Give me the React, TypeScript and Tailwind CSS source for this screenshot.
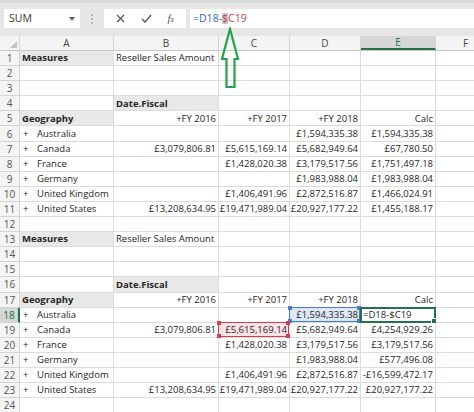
import React from "react";

type Mark = "blue" | "red" | "green";
interface Cell {
  t?: string;
  bold?: boolean;
  fill?: boolean;
  left?: boolean;
  plus?: boolean;
  mark?: Mark;
}

const COL_W = ["w-[94px]", "w-[105px]", "w-[71px]", "w-[71px]", "w-[75px]", "w-[60px]"];
const COL_NAMES = ["A", "B", "C", "D", "E", "F"];

const C = (t?: string, extra: Partial<Cell> = {}): Cell => ({ t, ...extra });
const blank = (): Cell[] => [C(), C(), C(), C(), C(), C()];
const geo = (name: string, b?: string, c?: string, d?: string, e?: string, marks: (Mark | undefined)[] = []): Cell[] => [
  C(name, { plus: true, left: true }),
  C(b, { mark: marks[1] }),
  C(c, { mark: marks[2] }),
  C(d, { mark: marks[3] }),
  C(e, { mark: marks[4], left: marks[4] === "green" }),
  C(),
];

const measures = (): Cell[] => [C("Measures", { bold: true, fill: true, left: true }), C("Reseller Sales Amount", { left: true }), C(), C(), C(), C()];
const fiscal = (): Cell[] => [C(), C("Date.Fiscal", { bold: true, fill: true, left: true }), C(), C(), C(), C()];
const heading = (): Cell[] => [C("Geography", { bold: true, fill: true, left: true }), C("+FY 2016"), C("+FY 2017"), C("+FY 2018"), C("Calc"), C()];

const ROWS: Cell[][] = [
  measures(),
  blank(),
  blank(),
  fiscal(),
  heading(),
  geo("Australia", undefined, undefined, "£1,594,335.38", "£1,594,335.38"),
  geo("Canada", "£3,079,806.81", "£5,615,169.14", "£5,682,949.64", "£67,780.50"),
  geo("France", undefined, "£1,428,020.38", "£3,179,517.56", "£1,751,497.18"),
  geo("Germany", undefined, undefined, "£1,983,988.04", "£1,983,988.04"),
  geo("United Kingdom", undefined, "£1,406,491.96", "£2,872,516.87", "£1,466,024.91"),
  geo("United States", "£13,208,634.95", "£19,471,989.04", "£20,927,177.22", "£1,455,188.17"),
  blank(),
  measures(),
  blank(),
  blank(),
  fiscal(),
  heading(),
  geo("Australia", undefined, undefined, "£1,594,335.38", "=D18-$C19", [undefined, undefined, undefined, "blue", "green"]),
  geo("Canada", "£3,079,806.81", "£5,615,169.14", "£5,682,949.64", "£4,254,929.26", [undefined, undefined, "red"]),
  geo("France", undefined, "£1,428,020.38", "£3,179,517.56", "£3,179,517.56"),
  geo("Germany", undefined, undefined, "£1,983,988.04", "£577,496.08"),
  geo("United Kingdom", undefined, "£1,406,491.96", "£2,872,516.87", "-£16,599,472.17"),
  geo("United States", "£13,208,634.95", "£19,471,989.04", "£20,927,177.22", "£20,927,177.22"),
  blank(),
];

function Handles({ color }: { color: string }) {
  return (
    <>
      <span className={`absolute -left-[2px] -top-[2px] w-[4px] h-[4px] ${color}`} />
      <span className={`absolute -right-[2px] -top-[2px] w-[4px] h-[4px] ${color}`} />
      <span className={`absolute -left-[2px] -bottom-[2px] w-[4px] h-[4px] ${color}`} />
      <span className={`absolute -right-[2px] -bottom-[2px] w-[4px] h-[4px] ${color}`} />
    </>
  );
}

function GridCell({ cell, width }: { cell: Cell; width: string }) {
  const bg = cell.fill
    ? "bg-[#e8e8e8]"
    : cell.mark === "blue"
      ? "bg-[#dde7f6]"
      : cell.mark === "red"
        ? "bg-[#fbe2e4]"
        : "bg-white";
  return (
    <div
      className={`relative ${width} shrink-0 h-full border-r border-b border-[#dcdcdc] ${bg} flex items-center ${cell.left ? "justify-start" : "justify-end"} px-[2px] whitespace-nowrap overflow-visible ${cell.bold ? "font-bold" : ""}`}
    >
      {cell.plus && <span className="inline-block w-[15px] pl-[1px]">+</span>}
      {cell.t}
      {cell.mark === "blue" && (
        <div className="absolute -left-px -top-px right-0 bottom-0 border border-[#4a78d0]">
          <Handles color="bg-[#4a78d0]" />
        </div>
      )}
      {cell.mark === "red" && (
        <div className="absolute -left-px -top-px right-0 bottom-0 border border-[#d0404f]">
          <Handles color="bg-[#d0404f]" />
        </div>
      )}
      {cell.mark === "green" && (
        <div className="absolute -left-px -top-px -right-px -bottom-px border-2 border-[#217346]">
          <span className="absolute -right-[3px] -bottom-[3px] w-[4px] h-[4px] bg-[#217346] border border-white box-content" />
        </div>
      )}
    </div>
  );
}

export default function App() {
  return (
    <div className="relative w-[474px] h-[412px] overflow-hidden bg-white text-[#262626] font-['Open_Sans','Noto_Sans',sans-serif] text-[9.5px] leading-none">
      {/* formula bar */}
      <div className="h-[36px] bg-[#e6e6e6] border-t-[3px] border-[#dadada] flex items-start pt-[6px]">
        <div className="ml-[4px] w-[76px] h-[19px] bg-white flex items-center justify-between pl-[5px] pr-[5px] text-[10.5px] text-[#333]">
          <span>SUM</span>
          <svg width="6" height="4" viewBox="0 0 6 4">
            <path d="M0 0 L6 0 L3 4 Z" fill="#666" />
          </svg>
        </div>
        <div className="w-[24px] h-[19px] flex flex-col items-center justify-center gap-[2px]">
          <span className="w-[2px] h-[2px] bg-[#b5b5b5]" />
          <span className="w-[2px] h-[2px] bg-[#b5b5b5]" />
          <span className="w-[2px] h-[2px] bg-[#b5b5b5]" />
        </div>
        <div className="w-[82px] h-[19px] bg-white flex items-center justify-around px-[4px] text-[#555]">
          <svg width="9" height="9" viewBox="0 0 9 9">
            <path d="M1 1 L8 8 M8 1 L1 8" stroke="#555" strokeWidth="1.2" />
          </svg>
          <svg width="11" height="9" viewBox="0 0 11 9">
            <path d="M1 5 L4 8 L10 1" stroke="#555" strokeWidth="1.3" fill="none" />
          </svg>
          <span className="font-['Liberation_Serif',serif] italic text-[11px] text-[#555]">
            f<span className="text-[8px]">x</span>
          </span>
        </div>
        <div className="ml-[4px] flex-1 h-[19px] bg-white flex items-center pl-[3px] text-[10.5px]">
          <span className="text-[#3366c8]">=D18-</span>
          <span className="text-[#c8404a] bg-[#c9c9c9]">$</span>
          <span className="text-[#c8404a]">C19</span>
        </div>
      </div>

      {/* column headers */}
      <div className="flex h-[15px] bg-[#f4f4f4] border-b border-[#c8c8c8] text-[#444] text-[10px]">
        <div className="relative w-[20px] shrink-0 h-full border-r border-[#d4d4d4]">
          <svg className="absolute right-[2px] bottom-[2px]" width="7" height="7" viewBox="0 0 7 7">
            <path d="M7 0 L7 7 L0 7 Z" fill="#c2c2c2" />
          </svg>
        </div>
        {COL_NAMES.map((n, i) => (
          <div
            key={n}
            className={`${COL_W[i]} shrink-0 h-full flex items-center justify-center border-r border-[#d4d4d4] ${n === "E" ? "bg-[#d6d6d6] border-b-2 border-b-[#217346] text-[#217346]" : ""}`}
          >
            {n}
          </div>
        ))}
      </div>

      {/* rows */}
      {ROWS.map((row, r) => (
        <div key={r} className="flex h-[15.1px]">
          <div
            className={`w-[20px] shrink-0 h-full flex items-center justify-center border-r border-b border-[#d4d4d4] text-[10px] ${r === 17 ? "bg-[#d6d6d6] border-r-2 border-r-[#217346] text-[#217346]" : "bg-[#f4f4f4] text-[#555]"}`}
          >
            {r + 1}
          </div>
          {row.map((cell, i) => (
            <GridCell key={i} cell={cell} width={COL_W[i]} />
          ))}
        </div>
      ))}

      {/* green arrow annotation */}
      <svg className="absolute left-[219px] top-[27px]" width="22" height="64" viewBox="0 0 22 64">
        <path d="M11 2 L19 32 L15.5 32 L15.5 60 L7.5 60 L7.5 32 L3 32 Z" fill="none" stroke="#22a447" strokeWidth="2.2" strokeLinejoin="miter" />
      </svg>
    </div>
  );
}
